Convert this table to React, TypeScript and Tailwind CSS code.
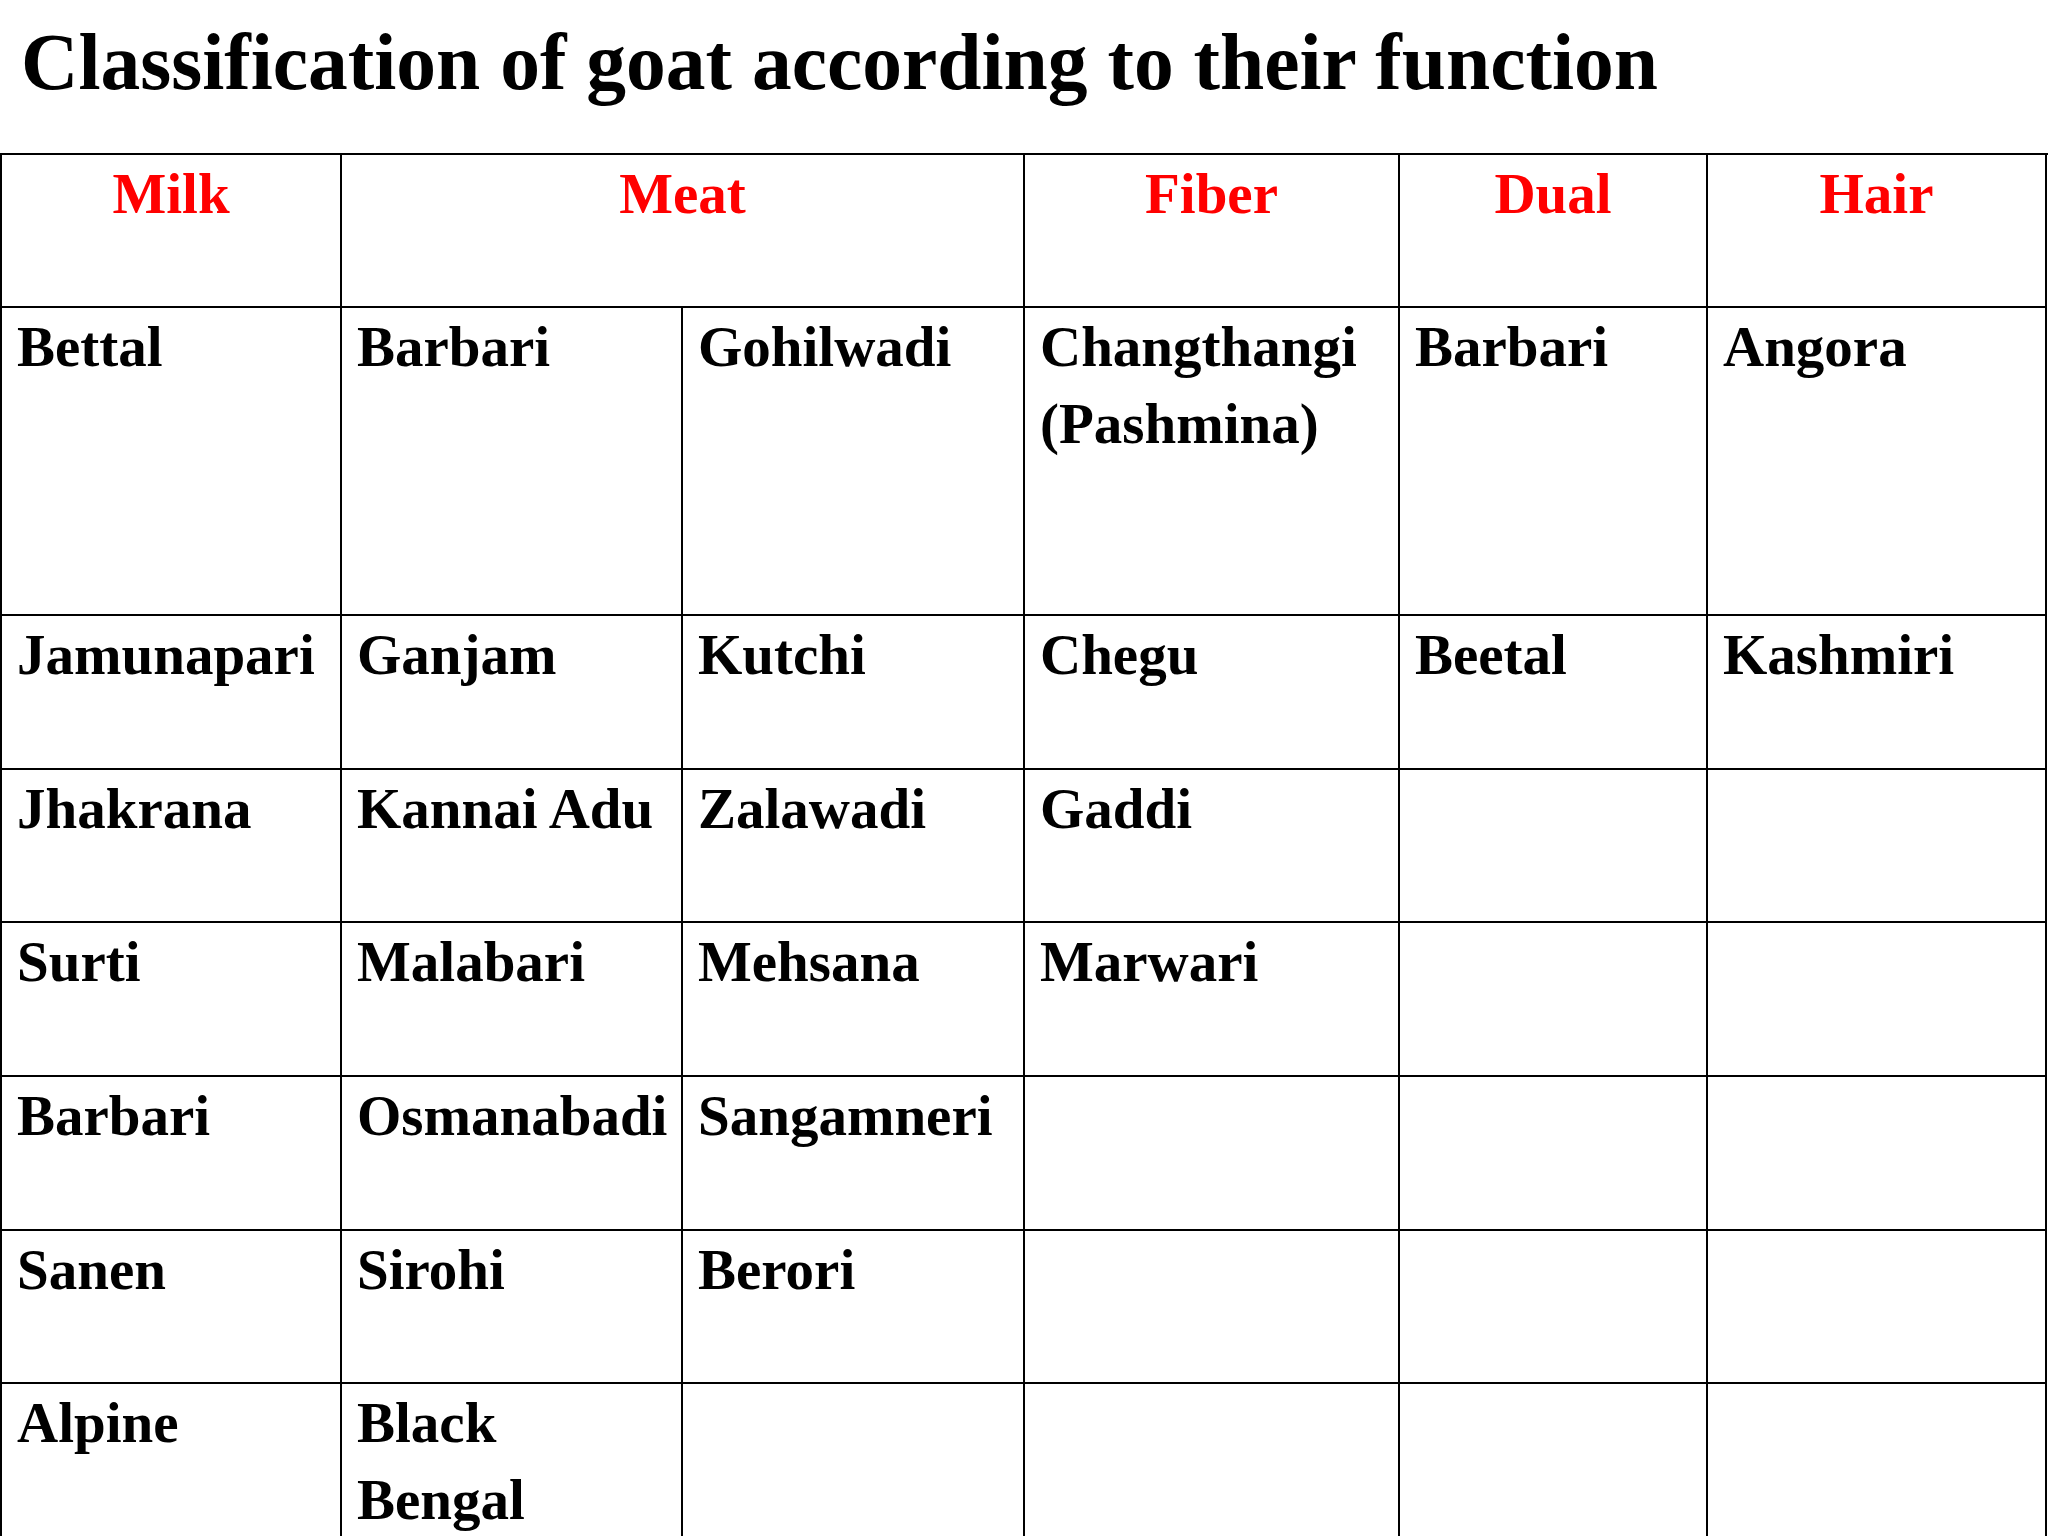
import React from 'react';

type Cell = { text?: string; lines?: string[] };

const headers: { label: string; span: number }[] = [
  { label: 'Milk', span: 1 },
  { label: 'Meat', span: 2 },
  { label: 'Fiber', span: 1 },
  { label: 'Dual', span: 1 },
  { label: 'Hair', span: 1 },
];

const rows: Cell[][] = [
  [{ text: 'Bettal' }, { text: 'Barbari' }, { text: 'Gohilwadi' }, { lines: ['Changthangi', '(Pashmina)'] }, { text: 'Barbari' }, { text: 'Angora' }],
  [{ text: 'Jamunapari' }, { text: 'Ganjam' }, { text: 'Kutchi' }, { text: 'Chegu' }, { text: 'Beetal' }, { text: 'Kashmiri' }],
  [{ text: 'Jhakrana' }, { text: 'Kannai Adu' }, { text: 'Zalawadi' }, { text: 'Gaddi' }, {}, {}],
  [{ text: 'Surti' }, { text: 'Malabari' }, { text: 'Mehsana' }, { text: 'Marwari' }, {}, {}],
  [{ text: 'Barbari' }, { text: 'Osmanabadi' }, { text: 'Sangamneri' }, {}, {}, {}],
  [{ text: 'Sanen' }, { text: 'Sirohi' }, { text: 'Berori' }, {}, {}, {}],
  [{ text: 'Alpine' }, { lines: ['Black', 'Bengal'] }, {}, {}, {}, {}],
];

const serif = { fontFamily: '"Liberation Serif", "Times New Roman", serif' };

const App: React.FC = () => {
  return (
    <div className="w-[2048px] h-[1536px] overflow-hidden bg-white text-black" style={serif}>
      <h1 className="pl-[21px] pt-[12px] text-[79.5px] leading-[100px] font-bold">
        Classification of goat according to their function
      </h1>

      {/* table drawn as a grid: container gives top/left lines, cells give right/bottom */}
      <div className="mt-[41px] grid grid-cols-[340px_341px_342px_375px_308px_339px] grid-rows-[153px_308px_154px_153px_154px_154px_153px_160px] border-t-2 border-l-2 border-black">
        {headers.map((h) => (
          <div
            key={h.label}
            className={`${h.span === 2 ? 'col-span-2' : ''} border-r-2 border-b-2 border-black text-center text-[57px] leading-[77px] font-bold text-[#ff0000]`}
          >
            {h.label}
          </div>
        ))}
        {rows.map((row, ri) =>
          row.map((cell, ci) => (
            <div
              key={`${ri}-${ci}`}
              className="border-r-2 border-b-2 border-black pl-[15px] text-[57px] leading-[77px] font-bold whitespace-nowrap"
            >
              {cell.text}
              {cell.lines &&
                cell.lines.map((l) => (
                  <div key={l}>{l}</div>
                ))}
            </div>
          ))
        )}
      </div>
    </div>
  );
};

export default App;
